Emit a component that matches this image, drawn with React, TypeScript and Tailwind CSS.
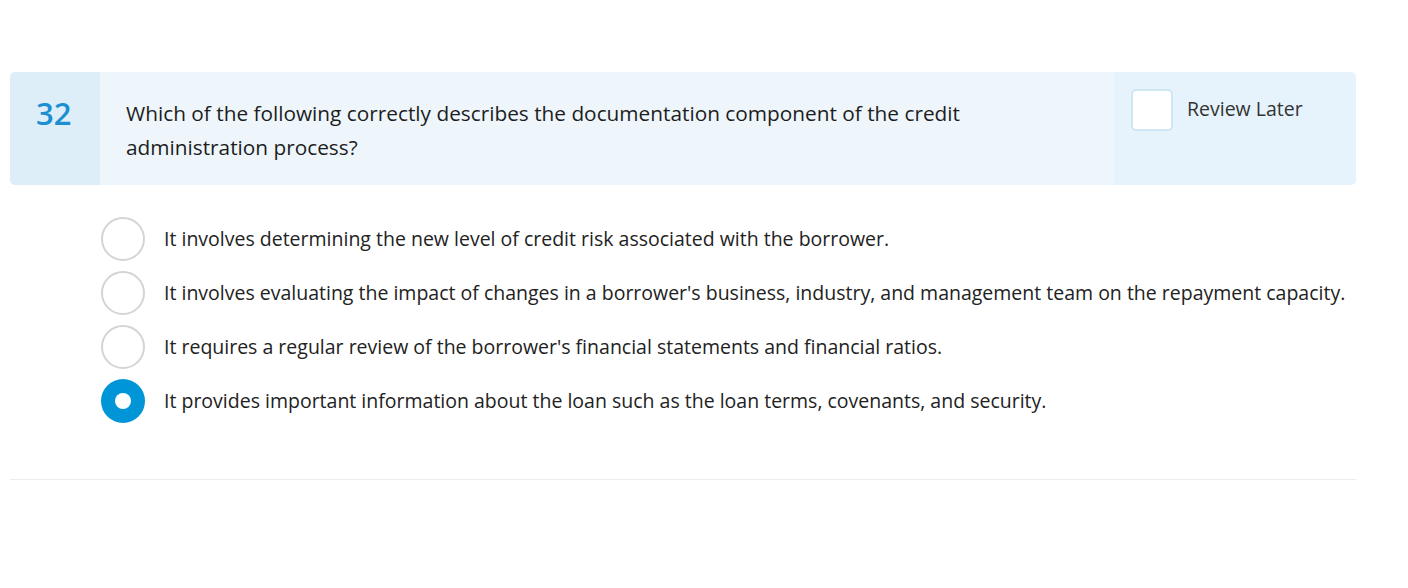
const options = [
  "It involves determining the new level of credit risk associated with the borrower.",
  "It involves evaluating the impact of changes in a borrower's business, industry, and management team on the repayment capacity.",
  "It requires a regular review of the borrower's financial statements and financial ratios.",
  "It provides important information about the loan such as the loan terms, covenants, and security.",
];

export default function App() {
  const selected = 3;

  return (
    <div className="h-[588px] w-[1408px] bg-white font-['Open_Sans',sans-serif] text-[#222]">
      <div className="ml-[10px] w-[1346px] pt-[72px]">
        <section className="flex h-[113px] overflow-hidden rounded-[5px] bg-[#eef6fc]">
          <div className="w-[90px] shrink-0 bg-[#ddeef9] pl-[26px] pt-[21px] text-[31px] font-semibold leading-[40px] text-[#1b8fd2]">
            32
          </div>
          <div className="flex-1 pl-[26px] pt-[24px] pr-[140px] text-[20.8px] leading-[34px] text-[#1d1d1d]">
            Which of the following correctly describes the documentation component of the credit administration process?
          </div>
          <div className="flex w-[242px] shrink-0 items-start gap-[14px] bg-[#e6f3fc] pl-[17px] pt-[17px]">
            <span className="block h-[42px] w-[42px] rounded-[5px] border-2 border-[#cfe6f5] bg-white" />
            <span className="pt-[7px] text-[19.5px] leading-[26px] text-[#333]">Review Later</span>
          </div>
        </section>

        <ul className="mt-[32px] flex flex-col gap-[10px] pl-[91px]">
          {options.map((text, i) => (
            <li className="flex h-[44px] items-center gap-[19px]" key={text}>
              {i === selected ? (
                <span className="flex h-[44px] w-[44px] shrink-0 items-center justify-center rounded-full bg-[#0095d6]">
                  <span className="block h-[16px] w-[16px] rounded-full bg-white" />
                </span>
              ) : (
                <span className="block h-[44px] w-[44px] shrink-0 rounded-full border-2 border-[#d4d4d4] bg-white" />
              )}
              <span className="whitespace-nowrap text-[19.5px] leading-[26px] text-[#222]">{text}</span>
            </li>
          ))}
        </ul>

        <div className="mt-[56px] h-px bg-[#ececec]" />
      </div>
    </div>
  );
}
